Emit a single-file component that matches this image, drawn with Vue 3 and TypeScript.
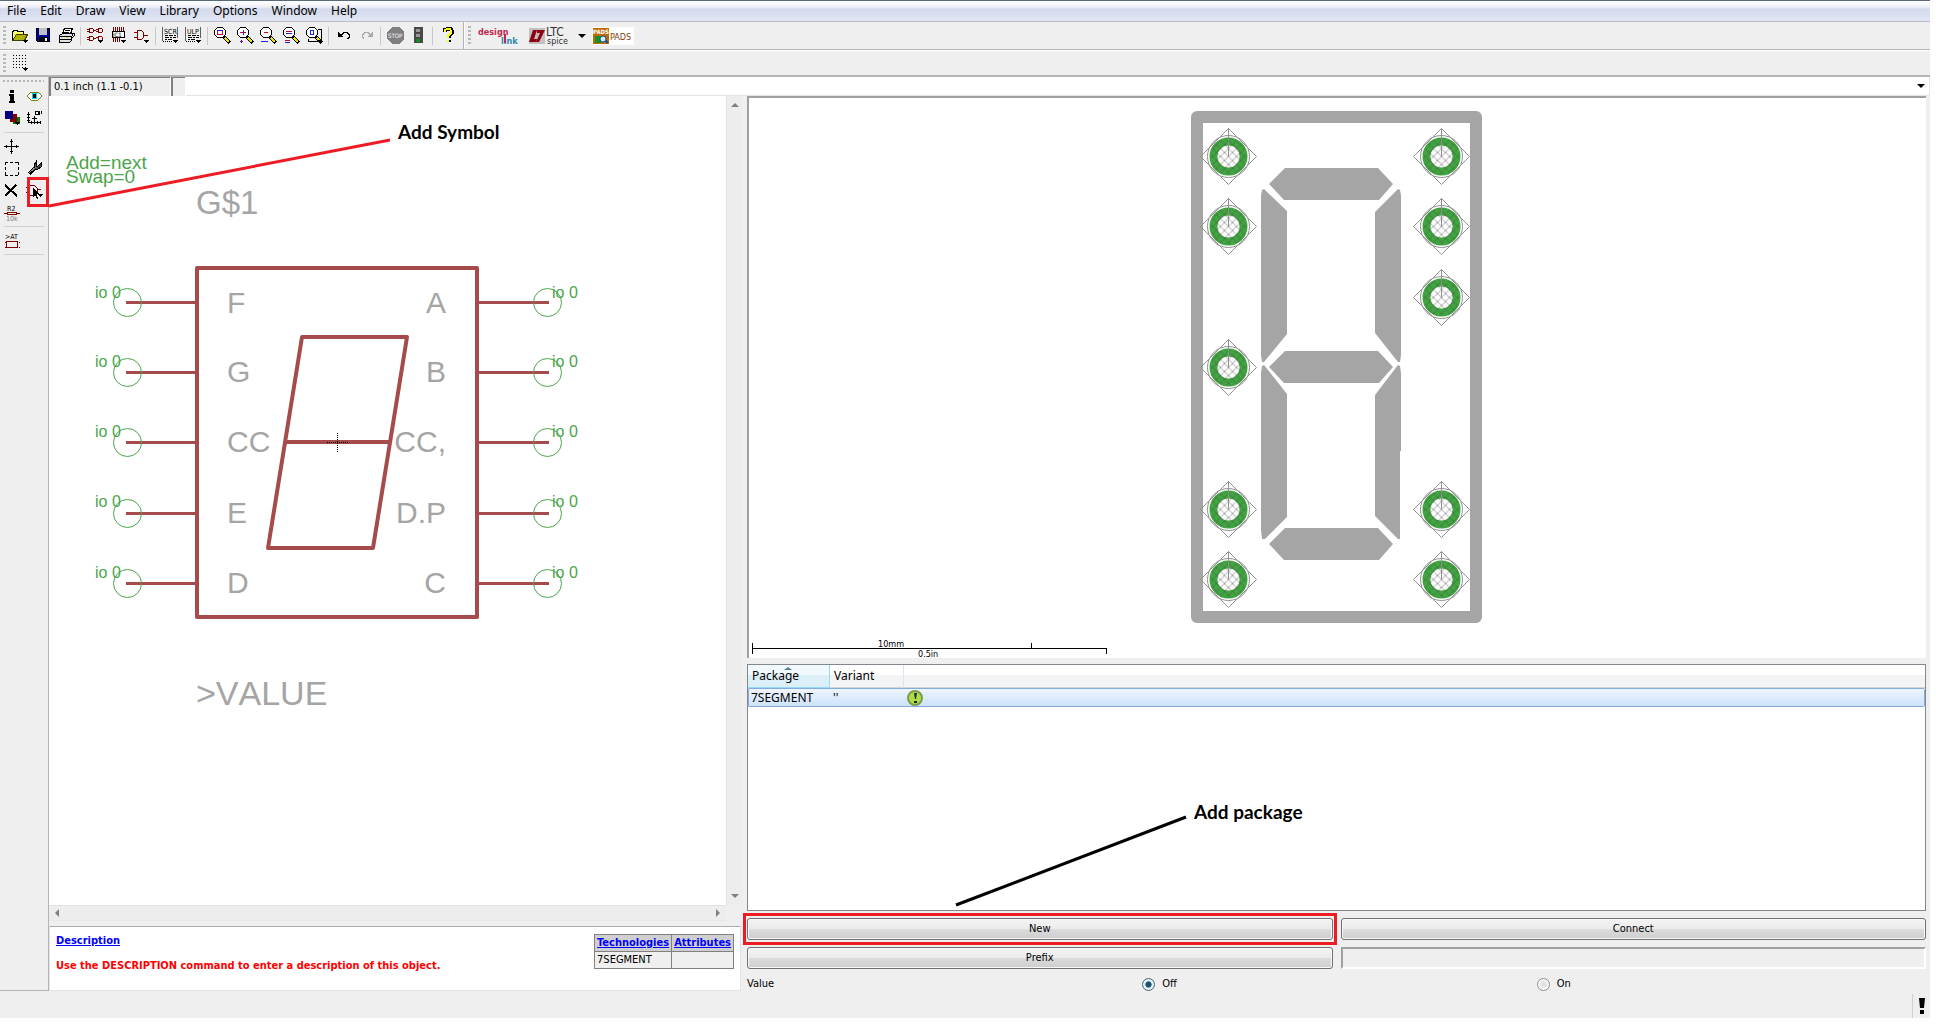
<script setup lang="ts">
import { ref } from 'vue'

interface Shape {
  d?: string
  f?: string
  s?: string
  w?: number
  t?: string
  x?: number
  y?: number
  size?: number
}
interface Tool {
  name: string
  shapes: Shape[]
}

const menus = ['File', 'Edit', 'Draw', 'View', 'Library', 'Options', 'Window', 'Help']

const maroon = '#800000'
const drop: Shape = { d: 'M11 13h5v1h-1v1h-1v1h-1v-1h-1v-1h-1z', f: '#000' }
const lens: Shape[] = [
  { d: 'M10 10l6 6', s: '#000', w: 4 },
  { d: 'M11 11l4 4', s: '#e8e000', w: 2 },
  { d: 'M3.500 .5h5l3 3v4l-3 3h-5l-3-3v-4z', f: '#fff', s: '#000', w: 1 }
]
const page: Shape[] = [
  { d: 'M.5 0v14M15.500 0v11', s: '#606060', w: 1 },
  { d: 'M3 8.500h3m1 0h4m1 0h2M3 10.500h4m1 0h2m1 0h3M3 12.500h2m1 0h4M1 14.500h1m1 0h1m1 0h1m1 0h1m1 0h1', s: '#000', w: 1 }
]

const groups: Tool[][] = [
  [
    {
      name: 'Open',
      shapes: [
        { d: 'M.5 13v-9h1v-1h4v1h6v3', f: '#ffff80', s: '#000', w: 1 },
        { d: 'M.5 13.500l4-6h11l-3 6z', f: '#b0b000', s: '#404000', w: 1 },
        { d: 'M2 6h8v1h-6l-2 4z', f: '#ffff60' },
        drop
      ]
    },
    {
      name: 'Save',
      shapes: [
        { d: 'M1 1h14v14h-13l-1-1z', f: '#000' },
        { d: 'M2 2h2v6h8v-6h2v12h-12z', f: '#0000a0' },
        { d: 'M4 1h8v7h-8z', f: '#c0c0c0' },
        { d: 'M4 10h9v4h-9z', f: '#000' },
        { d: 'M10 11h2v3h-2z', f: '#fff' }
      ]
    },
    {
      name: 'Print',
      shapes: [
        { d: 'M4.500 7l2-6h8l-2 6z', f: '#fff', s: '#000', w: 1 },
        { d: 'M7 3.500h5M6 5.500h5', s: '#000', w: 1 },
        { d: 'M1.500 8.500l3-2h11l-2 3v4l-2 2h-10z', f: '#e0e0e0', s: '#000', w: 1 },
        { d: 'M1 9.500h12M1 12.500h12M13 12l3-3v-3', s: '#000', w: 1 },
        { d: 'M8 10.500h2', s: '#e8e000', w: 1 }
      ]
    }
  ],
  [
    {
      name: 'Library devices',
      shapes: [
        { d: 'M2.500 1.500h3l1 1v2l-1 1h-3zM11.500 1.500h3l1 1v2l-1 1h-3zM2.500 9.500h3l1 1v2l-1 1h-3zM11.500 9.500h3l1 1v2l-1 1h-3zM0 2.500h2M0 4.500h2M7 3.500h2M9 2.500h2M9 4.500h2M0 10.500h2M0 12.500h2M7 11.500h2M9 10.500h2', s: maroon, w: 1 },
        drop
      ]
    },
    {
      name: 'Library packages',
      shapes: [
        { d: 'M3.500 0v4M5.500 0v4M7.500 0v4M9.500 0v4M11.500 0v4M13.500 0v4M3.500 11v4M5.500 11v4M7.500 11v4M9.500 11v4', s: maroon, w: 1 },
        { d: 'M2.500 4.500h12v6h-12z', f: '#fff', s: '#000', w: 1 },
        { t: 'IC1', x: 3, y: 10, size: 6 },
        drop
      ]
    },
    {
      name: 'Library symbols',
      shapes: [
        { d: 'M4.500 3.500h4l2 2v5l-2 2h-4zM1 5.500h3M1 10.500h3M11 8.500h4', s: maroon, w: 1 },
        drop
      ]
    }
  ],
  [
    { name: 'Script', shapes: [...page, { t: 'SCR', x: 2, y: 7, size: 7 }, drop] },
    { name: 'ULP', shapes: [...page, { t: 'ULP', x: 2, y: 7, size: 7 }, drop] }
  ],
  [
    { name: 'Zoom fit', shapes: [...lens, { d: 'M3.500 3.500h5v4h-5z', s: '#d00030', w: 1 }, { d: 'M3 3.500h6', s: '#2020e0', w: 1 }] },
    { name: 'Zoom in', shapes: [...lens, { d: 'M3 5.500h6M3 14.500h3', s: '#d00030', w: 1 }, { d: 'M6 3v5M4.500 13v3', s: '#2020e0', w: 1 }] },
    { name: 'Zoom out', shapes: [...lens, { d: 'M4 5.500h4', s: '#d00030', w: 1 }, { d: 'M1 14.500h7', s: '#2020e0', w: 1 }] },
    { name: 'Zoom redraw', shapes: [...lens, { d: 'M3 4.500h6M2 13.500h5', s: '#d00030', w: 1 }, { d: 'M3 6.500h6M2 15.500h5', s: '#2020e0', w: 1 }] },
    { name: 'Zoom select', shapes: [...lens, { d: 'M12 2.500h3v12h-13v-3', s: '#000', w: 1 }, { d: 'M4.500 3.500h3v4h-3z', s: '#2020e0', w: 1 }, drop] }
  ],
  [
    { name: 'Undo', shapes: [{ d: 'M3 5v5h5v-1h-1v-1h-1v-1h-1v-1h-1v-1z', f: '#000' }, { d: 'M6 7.500h1v-1h1v-1h4v1h1v1h1v3h-1v1h-1', s: '#000', w: 1 }] },
    { name: 'Redo', shapes: [{ d: 'M15 5v5h-5v-1h1v-1h1v-1h1v-1h1v-1z', f: '#a8a8a8' }, { d: 'M12 7.500h-1v-1h-1v-1h-4v1h-1v1h-1v3h1v1h1', s: '#a8a8a8', w: 1 }] }
  ],
  [
    { name: 'Stop', shapes: [{ d: 'M5 0h7l5 5v7l-5 5h-7l-5-5v-7z', f: '#808080' }, { t: 'STOP', x: 1, y: 11, size: 6 }] },
    { name: 'Go', shapes: [{ d: 'M4 0h9v16h-9z', f: '#484848' }, { d: 'M6 2h4v3h-4zM6 7h4v3h-4z', f: '#989898' }, { d: 'M6 12h4v3h-4z', f: '#109020' }] }
  ],
  [
    { name: 'Help', shapes: [{ d: 'M6 5v-2l2-1h4l1 2v2l-3 3v2M10 13v2', s: '#000', w: 4 }, { d: 'M6 5v-2l2-1h3l1 2v2l-3 3v2M9 13v2', s: '#ffff00', w: 2 }] }
  ]
]

const sideGroups: (Tool | null)[][] = [
  [
    { name: 'Info', shapes: [{ d: 'M7 2h4v3h-4zM6 6h5v7h1v2h-6v-2h1v-5h-1z', f: '#000' }] },
    { name: 'Show', shapes: [{ d: 'M1 8l4-4h7l4 4l-4 4h-7z', f: '#fff', s: '#808000', w: 1 }, { d: 'M6 5h5v6h-5z', f: '#00d8f0' }, { d: 'M7 6h3v4h-3z', f: '#000' }] },
    { name: 'Display', shapes: [{ d: 'M10 7h7v7h-7z', f: '#007800' }, { d: 'M7 4h7v8h-7z', f: maroon }, { d: 'M2 1h8v8h-8z', f: '#000080' }, { d: 'M12 12h5v1h-1v1h-1v1h-1v-1h-1v-1h-1z', f: '#000' }] },
    { name: 'Mark', shapes: [{ d: 'M2.500 2v11M2 12.500h13M1 4.500h3M1 7.500h3M1 10.500h3M5.500 11v3M8.500 11v3M11.500 11v3M14.500 11v3M6 8.500h5M8.500 6v5M9 1.500h3v3h-3zM13.500 1v4M15.500 1v3', s: '#000', w: 1 }] }
  ],
  [
    { name: 'Move', shapes: [{ d: 'M1 8.500h15M8.500 1v15M7 3.500h3M7 13.500h3M3.500 7v3M13.500 7v3', s: '#000', w: 1 }] },
    null,
    { name: 'Group', shapes: [{ d: 'M2 2.500h3m2 0h3m2 0h3M2 15.500h3m2 0h3m2 0h3M2.500 2v3m0 2v3m0 2v3M15.500 2v3m0 2v3m0 2v3', s: '#000', w: 1 }] },
    { name: 'Change', shapes: [{ d: 'M3 14l7-7', s: '#000', w: 4 }, { d: 'M10 2l-2 3v4h4l3-2v-4l-3 3h-2z', f: '#484848', s: '#000', w: 1 }, { d: 'M3 13l7-6', s: '#909090', w: 1 }] },
    { name: 'Delete', shapes: [{ d: 'M2 3l12 11M13 3l-11 11', s: '#000', w: 2 }] },
    { name: 'Add', shapes: [{ d: 'M3.500 3.500h5l3 3v5l-2 2h-6zM0 5.500h3M0 10.500h3M12 7.500h3', s: maroon, w: 1 }, { d: 'M7 6l6 6h-3l2 4-1 1-2-4-2 2z', f: '#000' }, { d: 'M12 12h5l-3 3z', f: '#000' }] },
    { name: 'Name', shapes: [{ t: 'R2', x: 4, y: 7, size: 7 }, { d: 'M4.500 8.500h9v2h-9zM1 9.500h3M14 9.500h3', s: maroon, w: 1 }, { t: '10k', x: 3, y: 17, size: 7, f: '#808080' }] },
    null
  ],
  [
    { name: 'Attribute', shapes: [{ t: '>AT', x: 2, y: 7, size: 7 }, { d: 'M3.500 9.500h11v6h-11zM2 9.500v1M2 14.500v1M16 9.500v1M16 14.500v1', s: maroon, w: 1 }] },
    null
  ]
]

const pinRows = [
  { y: 302, label: 298, left: 'F', right: 'A', text: 313 },
  { y: 372, label: 367, left: 'G', right: 'B', text: 382 },
  { y: 442, label: 437, left: 'CC', right: 'CC,', text: 452 },
  { y: 513, label: 507, left: 'E', right: 'D.P', text: 523 },
  { y: 583, label: 578, left: 'D', right: 'C', text: 593 }
]

const pads = [
  ...[156, 226, 367, 509, 579].map((y) => ({ x: 1228, y })),
  ...[156, 226, 297, 509, 579].map((y) => ({ x: 1441, y }))
]

const segments = [
  'M1269 184l16-16h93l15 16-14 16h-95z',
  'M1269 367l16-16h93l15 16-14 16h-95z',
  'M1269 544l16-16h93l15 16-14 16h-95z',
  'M1264 189l23 22v123l-23 28h-2l-1-7v-160l1-5z',
  'M1398 189l2 1 1 5v160l-1 7h-2l-23-29v-121z',
  'M1264 365l23 29v123l-22 22h-3l-1-9v-157l1-7z',
  'M1398 365l2 1 1 7v78h-1v88h-2l-23-23v-121z'
]

const command = ref('')
const valueMode = ref('off')
</script>

<template>
  <div class="app">
    <nav class="menubar">
      <button v-for="m in menus" :key="m" type="button">{{ m }}</button>
    </nav>

    <header class="toolbar">
      <span class="grip"></span>
      <template v-for="(g, gi) in groups" :key="gi">
        <span v-if="gi" class="sep"></span>
        <button v-for="tool in g" :key="tool.name" type="button" class="tool" :aria-label="tool.name">
          <svg width="17" height="17" viewBox="0 0 17 17" shape-rendering="crispEdges">
            <template v-for="(s, i) in tool.shapes" :key="i">
              <path v-if="s.d" :d="s.d" :fill="s.f || 'none'" :stroke="s.s || 'none'" :stroke-width="s.w || 0" />
              <text v-else :x="s.x" :y="s.y" :font-size="s.size" :fill="tool.name === 'Stop' ? '#fff' : '#000'">{{ s.t }}</text>
            </template>
          </svg>
        </button>
      </template>
      <span class="edge"></span>
      <span class="grip"></span>
      <button type="button" class="logo" aria-label="Design link">
        <svg width="42" height="20" viewBox="0 0 42 20">
          <text x="0" y="9" font-size="9" fill="#c02850" font-weight="700">design</text>
          <text x="23" y="18" font-size="9" fill="#3088b0" font-weight="700">link</text>
          <path d="M27 8v9" stroke="#c02850" stroke-width="2" />
        </svg>
      </button>
      <button type="button" class="logo" aria-label="LTC spice">
        <svg width="42" height="20" viewBox="0 0 42 20">
          <path d="M0 2h16v16H0z" fill="#c0c0c0" />
          <path d="M4 4h4L5 13h3l-1 3H0zM8 4h8l-6 12H7l4-9H8z" fill="#900010" />
          <text x="17" y="10" font-size="12" fill="#303030">LTC</text>
          <text x="18" y="18" font-size="9" fill="#303030">spice</text>
        </svg>
      </button>
      <button type="button" class="more" aria-label="LTC spice options"><i class="tri down"></i></button>
      <button type="button" class="logo" aria-label="Pads">
        <svg width="42" height="18" viewBox="0 0 42 18">
          <path d="M0 0h42v18H0z" fill="#fff" />
          <path d="M1 1h16v16H1z" fill="#c06800" />
          <path d="M3 9h6v7H3z" fill="#189020" />
          <path d="M12 12l4 4" stroke="#1050a0" stroke-width="2" />
          <circle cx="11" cy="12" r="3" fill="#c8f0ff" stroke="#1050a0" />
          <text x="1" y="7" font-size="6" fill="#fff" font-weight="700">PADS</text>
          <text x="18" y="13" font-size="9" fill="#804010">PADS</text>
        </svg>
      </button>
    </header>

    <div class="toolbar second">
      <span class="grip"></span>
      <button type="button" class="tool" aria-label="Grid">
        <svg width="17" height="17" viewBox="0 0 17 17" shape-rendering="crispEdges">
          <path v-for="n in 5" :key="n" :d="`M1 ${n * 3 - 2.5}h15`" stroke="#000" stroke-dasharray="1 2" />
          <path :d="drop.d" fill="#000" />
        </svg>
      </button>
    </div>

    <div class="work">
      <aside class="side">
        <span class="grip-h"></span>
        <div v-for="(g, gi) in sideGroups" :key="gi" class="side-group">
          <template v-for="(tool, ti) in g" :key="ti">
            <button v-if="tool" type="button" class="side-tool" :class="{ marked: tool.name === 'Add' }" :aria-label="tool.name">
              <svg width="20" height="20" viewBox="-1 -1 20 20" shape-rendering="crispEdges">
                <template v-for="(s, i) in tool.shapes" :key="i">
                  <path v-if="s.d" :d="s.d" :fill="s.f || 'none'" :stroke="s.s || 'none'" :stroke-width="s.w || 0" />
                  <text v-else :x="s.x" :y="s.y" :font-size="s.size" :fill="s.f || '#000'">{{ s.t }}</text>
                </template>
              </svg>
            </button>
            <span v-else class="side-tool"></span>
          </template>
        </div>
      </aside>

      <div class="main">
        <div class="command">
          <output class="coords">0.1 inch (1.1 -0.1)</output>
          <span class="well"></span>
          <input v-model="command" type="text" aria-label="Command line" />
          <button type="button" aria-label="Command history"><i class="tri down"></i></button>
        </div>

        <div class="panes">
          <section class="left">
            <div class="symbol">
              <svg width="677" height="809" viewBox="49 96 677 809">
                <g class="green" font-size="19">
                  <text x="66" y="169">Add=next</text>
                  <text x="66" y="183">Swap=0</text>
                </g>
                <g class="gray">
                  <text x="196" y="214" font-size="33">G$1</text>
                  <text x="196" y="705" font-size="34">&gt;VALUE</text>
                </g>
                <g stroke="#a54b4b" fill="none" stroke-width="4" stroke-linejoin="round">
                  <path d="M197 268h280v349H197z" />
                  <path d="M302 337h105l-34 211H268z" />
                  <path d="M286 442h104" />
                </g>
                <g v-for="p in pinRows" :key="p.y">
                  <path :d="`M126 ${p.y + 0.5}h70M478 ${p.y + 0.5}h71`" stroke="#a54b4b" stroke-width="3" />
                  <g fill="none" stroke="#4ba54b">
                    <circle cx="127.500" :cy="p.y + 0.5" r="14" />
                    <circle cx="547.500" :cy="p.y + 0.5" r="14" />
                  </g>
                  <g class="green" font-size="16">
                    <text x="95" :y="p.label">io 0</text>
                    <text x="552" :y="p.label">io 0</text>
                  </g>
                  <g class="gray" font-size="30">
                    <text x="227" :y="p.text">{{ p.left }}</text>
                    <text x="446" :y="p.text" text-anchor="end">{{ p.right }}</text>
                  </g>
                </g>
                <path d="M327 442.500h21M337.500 433v20" stroke="#000" stroke-dasharray="1 1" shape-rendering="crispEdges" />
              </svg>
            </div>
            <div class="vbar"><i class="tri up gray"></i><i class="tri down gray"></i></div>
            <div class="hbar"><i class="tri west gray"></i><i class="tri east gray"></i></div>
            <div class="about">
              <div>
                <a href="#description">Description</a>
                <p>Use the DESCRIPTION command to enter a description of this object.</p>
              </div>
              <table class="tech">
                <thead>
                  <tr>
                    <th><a href="#technologies">Technologies</a></th>
                    <th><a href="#attributes">Attributes</a></th>
                  </tr>
                </thead>
                <tbody>
                  <tr>
                    <td>7SEGMENT</td>
                    <td></td>
                  </tr>
                </tbody>
              </table>
            </div>
          </section>

          <section class="right">
            <div class="package">
              <svg width="1176" height="560" viewBox="749 98 1176 560">
                <defs>
                  <pattern id="hatch" width="8" height="8" patternUnits="userSpaceOnUse">
                    <path d="M0 0l8 8M8 0l-8 8" stroke="#505050" stroke-opacity=".5" stroke-width="1" />
                  </pattern>
                </defs>
                <path d="M1197 117h279v500h-279z" fill="none" stroke="#a5a5a5" stroke-width="12" stroke-linejoin="round" />
                <path v-for="s in segments" :key="s" :d="s" fill="#a5a5a5" />
                <g v-for="p in pads" :key="`${p.x}-${p.y}`" :transform="`translate(${p.x + 0.5} ${p.y + 0.5})`">
                  <circle r="15" fill="none" stroke="#3fa53f" stroke-width="8" />
                  <circle r="18" fill="url(#hatch)" />
                  <g fill="none" stroke="#909090">
                    <circle r="21" />
                    <path d="M0-28l28 28-28 28-28-28zM0-28v28" />
                  </g>
                </g>
                <path d="M752.500 643v11M752 648.500h355M1031.500 643v5M1106.500 648v6" fill="none" stroke="#000" />
                <g class="scale">
                  <text x="878" y="647">10mm</text>
                  <text x="918" y="657">0.5in</text>
                </g>
              </svg>
            </div>

            <div class="list">
              <table>
                <thead>
                  <tr>
                    <th class="sorted">Package</th>
                    <th class="variant">Variant</th>
                    <th></th>
                  </tr>
                </thead>
                <tbody>
                  <tr>
                    <td>7SEGMENT</td>
                    <td>''</td>
                    <td>
                      <svg width="16" height="16" viewBox="0 0 16 16" aria-label="Unconnected pins">
                        <circle cx="8" cy="8" r="7" fill="#b4da48" stroke="#7c9c4c" stroke-width="2" />
                        <path d="M7 3h3l-1 6h-1zM7 11h3v2h-3z" fill="#103040" />
                      </svg>
                    </td>
                  </tr>
                </tbody>
              </table>
              <div class="package-note">
                <svg width="236" height="92" viewBox="0 0 236 92"><path d="M1 90L231 2" stroke="#000" stroke-width="3" /></svg>
                <span>Add package</span>
              </div>
            </div>

            <div class="actions">
              <div class="new"><button type="button">New</button></div>
              <button type="button">Connect</button>
              <button type="button">Prefix</button>
              <input type="text" readonly aria-label="Prefix" />
            </div>
            <div class="value" role="radiogroup" aria-label="Value">
              <span>Value</span>
              <label><input v-model="valueMode" type="radio" name="value" value="off" />Off</label>
              <label><input v-model="valueMode" type="radio" name="value" value="on" />On</label>
            </div>
          </section>
        </div>
      </div>

      <div class="symbol-note">
        <svg width="344" height="72" viewBox="0 0 344 72"><path d="M1 69L342 3" stroke="#ed1c24" stroke-width="3" /></svg>
        <span>Add Symbol</span>
      </div>
    </div>

    <footer class="status">
      <span class="alert">
        <svg width="8" height="16" viewBox="0 0 8 16"><path d="M1 0h6l-1 10H2zM2 12h4v4H2z" fill="#000" /></svg>
      </span>
    </footer>
  </div>
</template>

<style>
body {
  margin: 0;
  background: #fff;
}
</style>

<style scoped>
.app {
  display: flex;
  flex-direction: column;
  box-sizing: border-box;
  min-height: calc(100vh - 10px);
  margin: 0 6px 10px 0;
  background: #efefef;
  color: #000;
  font: 11px/14px 'DejaVu Sans Condensed', 'DejaVu Sans', sans-serif;
}
button {
  padding: 0;
  border: 0;
  background: none;
  color: inherit;
  font: inherit;
}
svg {
  display: block;
  flex: none;
}
a {
  color: #0000ff;
  font-weight: 700;
}

.menubar {
  display: flex;
  gap: 14px;
  height: 22px;
  box-sizing: border-box;
  padding-left: 7px;
  border-top: 1px solid #5a6a7c;
  border-bottom: 1px solid #b8bcc8;
  background: linear-gradient(#fff, #eef0f8 30%, #d4daec 40%, #e2e6f4);
  font: 12px/18px 'Noto Sans', 'Open Sans', sans-serif;
}

.toolbar {
  display: flex;
  align-items: center;
  height: 28px;
  box-sizing: border-box;
  border-bottom: 1px solid #b4b4b4;
}
.toolbar.second {
  height: 27px;
  border-top: 1px solid #fff;
  border-bottom: 2px solid #b4b4b4;
}
.toolbar text,
.side text {
  font-family: 'DejaVu Sans Condensed', sans-serif;
}
.grip {
  width: 3px;
  height: 19px;
  margin: 0 3px;
  background: repeating-linear-gradient(#b8b8b8 0 2px, transparent 2px 4px);
}
.tool {
  display: flex;
  justify-content: center;
  width: 23px;
}
.sep {
  width: 1px;
  height: 18px;
  margin: 0 3px 0 2px;
  background: #c8c8c8;
}
.edge {
  width: 1px;
  height: 27px;
  margin-left: 4px;
  border-right: 1px solid #fff;
  background: #b4b4b4;
}
.logo {
  margin-left: 4px;
  margin-right: 5px;
}
.more {
  width: 12px;
}
.tri {
  display: block;
  width: 0;
  height: 0;
  margin: auto;
  border: 4px solid transparent;
}
.tri.down {
  border-top-color: #000;
  border-bottom: 0;
}
.tri.up {
  border-bottom-color: #808080;
  border-top: 0;
}
.tri.west {
  border-right-color: #808080;
  border-left: 0;
}
.tri.east {
  border-left-color: #808080;
  border-right: 0;
}
.tri.down.gray {
  border-top-color: #808080;
}

.work {
  position: relative;
  display: flex;
  flex: 1;
}
.side {
  width: 49px;
  box-sizing: border-box;
  border-right: 1px solid #b4b4b4;
  border-bottom: 1px solid #b4b4b4;
}
.grip-h {
  display: block;
  height: 2px;
  margin: 3px 4px 4px 3px;
  background: repeating-linear-gradient(90deg, #b8b8b8 0 2px, transparent 2px 4px);
}
.side-group {
  display: grid;
  grid-template-columns: 23px 23px;
  position: relative;
  padding-bottom: 3px;
  margin-bottom: 3px;
}
.side-group::after {
  content: '';
  position: absolute;
  left: 4px;
  right: 4px;
  bottom: 0;
  height: 1px;
  background: #d0d0d0;
}
.side-tool {
  position: relative;
  display: flex;
  align-items: center;
  justify-content: center;
  height: 22px;
}
.side-tool.marked::after {
  content: '';
  position: absolute;
  inset: -3px -3px -5px 4px;
  border: 3px solid #ed1c24;
}

.main {
  display: flex;
  flex-direction: column;
  flex: 1;
  min-width: 0;
}
.command {
  display: flex;
  height: 19px;
  background: #fff;
}
.coords,
.well {
  box-sizing: border-box;
  border-left: 2px solid #808080;
  border-top: 1px solid #808080;
  background: #efefef;
}
.coords {
  width: 121px;
  padding-left: 3px;
  line-height: 17px;
}
.well {
  width: 14px;
  margin: 0 1px;
}
.command input {
  flex: 1;
  min-width: 0;
  padding: 0 4px;
  border: 0;
  border-bottom: 1px solid #e3e3e9;
  background: #fff;
  font: inherit;
}
.command button {
  width: 18px;
  border-right: 1px solid #e3e3e9;
  border-bottom: 1px solid #e3e3e9;
}

.panes {
  display: grid;
  grid-template-columns: minmax(0, 7fr) minmax(0, 12fr);
  flex: 1;
}
.left {
  display: grid;
  grid-template-columns: minmax(0, 1fr) 16px;
  grid-template-rows: 1fr 16px 70px;
}
.symbol {
  overflow: hidden;
  background: #fff;
}
.symbol text {
  font-family: 'Liberation Sans', Arial, sans-serif;
  font-kerning: none;
}
.green {
  fill: #4ba54b;
}
g.gray {
  fill: #a5a5a5;
}
.vbar,
.hbar {
  display: flex;
  justify-content: space-between;
  box-sizing: border-box;
  background: #ededed;
}
.vbar {
  flex-direction: column;
  padding: 7px 0;
  border-left: 1px solid #e2e2e2;
}
.vbar .tri {
  margin: 0 auto;
}
.hbar {
  align-items: center;
  padding: 0 6px;
  border-top: 1px solid #e2e2e2;
  border-bottom: 1px solid #e6e6e6;
}
.hbar .tri {
  margin: 0;
}
.about {
  grid-column: 1 / 3;
  display: flex;
  justify-content: space-between;
  align-items: flex-start;
  box-sizing: border-box;
  margin: 5px 1px 0 0;
  padding: 7px 6px 0;
  border: 1px solid #e3e3e9;
  border-top-color: #a8aab4;
  background: #fff;
}
.about p {
  margin: 11px 0 0;
  color: #ff0000;
  font-weight: 700;
}
.tech {
  border: 1px solid #808080;
  border-collapse: collapse;
  background: #efefef;
}
.tech th,
.tech td {
  height: 16px;
  padding: 0 2px;
  border: 1px solid #808080;
  text-align: left;
}
.tech th {
  background: #d0d0d0;
}

.right {
  display: flex;
  flex-direction: column;
  padding: 0 4px 0 5px;
}
.package {
  flex: 1;
  overflow: hidden;
  border-top: 2px solid #a0a0a0;
  border-left: 2px solid #a0a0a0;
  background: #fff;
}
.scale {
  font-size: 9px;
}
.list {
  position: relative;
  height: 245px;
  margin: 6px 0 7px;
  border: 1px solid #828790;
  background: #fff;
}
.list table {
  width: 100%;
  table-layout: fixed;
  border-spacing: 0;
  font: 12px/16px 'Noto Sans', 'Open Sans', sans-serif;
}
.list th {
  height: 22px;
  padding: 0 4px;
  border-right: 1px solid #e2e4e8;
  border-bottom: 1px solid #d5d5d5;
  background: linear-gradient(#fff 45%, #f3f4f6 46%);
  font-weight: 400;
  text-align: left;
}
.list th:last-child {
  border-right: 0;
}
.list th.sorted {
  position: relative;
  width: 73px;
  border-color: #96d9f9;
  background: linear-gradient(#f2f9fc 45%, #dceef7 46%);
}
.list th.sorted::before {
  content: '';
  position: absolute;
  left: 36px;
  top: 2px;
  border: 4px solid transparent;
  border-top: 0;
  border-bottom: 3px solid #508098;
}
.list th.variant {
  width: 65px;
}
.list td {
  height: 17px;
  padding: 0 3px;
  border-top: 1px solid #84acdd;
  border-bottom: 1px solid #84acdd;
  background: linear-gradient(#eff5fd, #cde2fb);
}
.list td:first-child {
  border-left: 1px solid #84acdd;
  border-radius: 2px 0 0 2px;
  padding-left: 2px;
}
.list td:last-child {
  border-right: 1px solid #84acdd;
  border-radius: 0 2px 2px 0;
}

.actions {
  display: grid;
  grid-template-columns: 1fr 1fr;
  gap: 7px 8px;
}
.actions button {
  width: 100%;
  height: 22px;
  border: 1px solid #707070;
  border-radius: 3px;
  background: linear-gradient(#f3f3f3, #ebebeb 50%, #dcdcdc 51%, #cdcdcd);
  box-shadow: inset 0 0 0 1px #f8f8f8;
}
.new {
  position: relative;
}
.new::after {
  content: '';
  position: absolute;
  inset: -5px -4px;
  border: 3px solid #ed1c24;
}
.actions input {
  box-sizing: border-box;
  width: 100%;
  height: 22px;
  border: 2px solid #fff;
  border-top-color: #a0a0a0;
  border-left-color: #a0a0a0;
  background: #efefef;
}
.value {
  display: grid;
  grid-template-columns: repeat(3, 1fr);
  align-items: end;
  height: 22px;
  margin-right: -4px;
}
.value label {
  display: flex;
  align-items: center;
  gap: 7px;
}
.value input {
  appearance: none;
  box-sizing: border-box;
  width: 13px;
  height: 13px;
  margin: 0 0 0 1px;
  border: 1px solid #8e8f8f;
  border-radius: 50%;
  background: radial-gradient(#e0e0e0 20%, #fafafa 70%);
}
.value input:checked {
  border-color: #4c6478;
  background: radial-gradient(#20506c 35%, #e0f0f8 45%);
}

.symbol-note,
.package-note {
  position: absolute;
  display: flex;
  align-items: flex-start;
  pointer-events: none;
  font: 700 19px/22px Lato, sans-serif;
  white-space: nowrap;
}
.symbol-note {
  left: 48px;
  top: 60px;
  gap: 6px;
}
.symbol-note span {
  margin-top: -16px;
}
.package-note {
  left: 207px;
  top: 150px;
  gap: 3px;
}
.package-note span {
  margin-top: -14px;
}

.status {
  display: flex;
  justify-content: flex-end;
  align-items: flex-end;
  height: 27px;
}
.alert {
  display: flex;
  align-items: center;
  justify-content: center;
  width: 17px;
  height: 24px;
  border-left: 1px solid #d0d0d0;
}
</style>
